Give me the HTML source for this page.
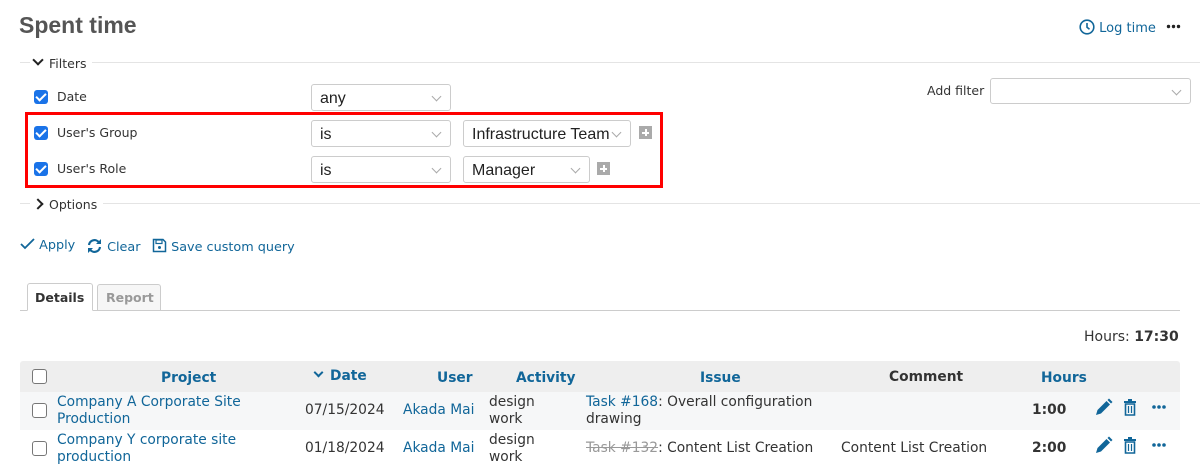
<!DOCTYPE html>
<html><head><meta charset="utf-8"><style>
*{box-sizing:border-box;margin:0;padding:0}
body{width:1200px;height:466px;overflow:hidden;background:#fff;font-family:"DejaVu Sans",Verdana,sans-serif;font-size:12px;color:#333;position:relative}
.a{position:absolute;white-space:nowrap}
.blue{color:#169}
.sel{position:absolute;border:1px solid #ccc;border-radius:3px;background:#fff;font-family:"Liberation Sans",Arial,sans-serif;font-size:16px;color:#222;padding:6px 8px;height:27px;line-height:16px}
.sel:after{content:"";position:absolute;right:10px;top:8px;width:6px;height:6px;border-right:1px solid #aaa;border-bottom:1px solid #aaa;transform:rotate(45deg)}
.cb{position:absolute;width:14px;height:14px;background:#1a73e8;border-radius:3px}
.cb:after{content:"";position:absolute;left:4px;top:1px;width:4px;height:8px;border-right:2px solid #fff;border-bottom:2px solid #fff;transform:rotate(45deg)}
.plus{position:absolute;width:13px;height:13px;background:#aaa;}
.plus:before{content:"";position:absolute;left:3px;top:6px;width:7px;height:2px;background:#fff}
.plus:after{content:"";position:absolute;left:6px;top:3px;width:2px;height:7px;background:#fff}
.ecb{position:absolute;width:15px;height:15px;border:1px solid #777;border-radius:3px;background:#fff}
.t{font-size:13.8px}
</style></head><body>
<div class="a" style="left:19px;top:12px;font-family:'Liberation Sans',Arial,sans-serif;font-weight:bold;font-size:23px;color:#555">Spent time</div>
<div class="a blue" style="left:1079px;top:19px;font-size:13px">
<svg width="16" height="16" viewBox="0 0 16 16" style="vertical-align:-3px"><circle cx="8" cy="8" r="6.8" fill="none" stroke="#169" stroke-width="1.6"/><path d="M8 4v4.3l2.5 2" fill="none" stroke="#169" stroke-width="1.6"/></svg> Log time</div>
<svg class="a" style="left:1166px;top:24px" width="16" height="5" viewBox="0 0 16 5"><circle cx="2.5" cy="2.5" r="1.7" fill="#222"/><circle cx="7.5" cy="2.5" r="1.7" fill="#222"/><circle cx="12.5" cy="2.5" r="1.7" fill="#222"/></svg>

<div class="a" style="left:20px;top:62px;width:1180px;height:1px;background:#e4e4e4"></div>
<div class="a" style="left:30px;top:56px;background:#fff;padding:0 6px 0 4px;font-size:12.5px"><span style="display:inline-block;width:8px;height:8px;border-right:2px solid #222;border-bottom:2px solid #222;transform:rotate(45deg);margin-right:7px;vertical-align:4px"></span>Filters</div>

<div class="cb" style="left:34px;top:90px"></div><div class="a" style="left:57px;top:89px;font-size:12.5px">Date</div>
<div class="sel" style="left:311px;top:84px;width:140px">any</div>
<div class="a" style="left:927px;top:83px;font-size:12.5px">Add filter</div>
<div class="sel" style="left:990px;top:78px;width:201px;height:26px"></div>

<div class="a" style="left:25px;top:112px;width:638px;height:76px;border:3.5px solid #f00"></div>
<div class="cb" style="left:34px;top:126px"></div><div class="a" style="left:57px;top:125px;font-size:12.5px">User's Group</div>
<div class="sel" style="left:311px;top:120px;width:140px">is</div>
<div class="sel" style="left:463px;top:120px;width:168px">Infrastructure Team</div>
<div class="plus" style="left:639px;top:126px"></div>
<div class="cb" style="left:34px;top:162px"></div><div class="a" style="left:57px;top:161px;font-size:12.5px">User's Role</div>
<div class="sel" style="left:311px;top:156px;width:140px">is</div>
<div class="sel" style="left:463px;top:156px;width:127px">Manager</div>
<div class="plus" style="left:597px;top:162px"></div>

<div class="a" style="left:20px;top:203px;width:1180px;height:1px;background:#e4e4e4"></div>
<div class="a" style="left:30px;top:197px;background:#fff;padding:0 6px 0 4px;font-size:12.5px"><span style="display:inline-block;width:8px;height:8px;border-right:2px solid #222;border-bottom:2px solid #222;transform:rotate(-45deg);margin-right:7px;vertical-align:1px"></span>Options</div>

<div class="a blue" style="left:20px;top:238px;font-size:12.8px"><svg width="15" height="12" viewBox="0 0 15 12" style="vertical-align:-1px"><path d="M1 6l4 4 9-9" fill="none" stroke="#169" stroke-width="1.8"/></svg> Apply</div>
<div class="a blue" style="left:86px;top:238px;font-size:12.8px"><svg width="17" height="16" viewBox="0 0 17 16" style="vertical-align:-3px"><path d="M3 7a5.5 5.5 0 0 1 10-2.5M14 9a5.5 5.5 0 0 1-10 2.5" fill="none" stroke="#169" stroke-width="2.2"/><path d="M15 1v5h-5zM2 15v-5h5z" fill="#169"/></svg> Clear</div>
<div class="a blue" style="left:152px;top:238px;font-size:12.8px"><svg width="15" height="15" viewBox="0 0 15 15" style="vertical-align:-2px"><path d="M1.5 1.5h9.5l2.5 2.5v9.5h-12z" fill="none" stroke="#169" stroke-width="1.5"/><rect x="4" y="2" width="6" height="3.5" fill="none" stroke="#169" stroke-width="1.2"/><circle cx="7.5" cy="9.5" r="1.5" fill="#169"/></svg> Save custom query</div>

<div class="a" style="left:20px;top:310px;width:1160px;height:1px;background:#ccc"></div>
<div class="a" style="left:27px;top:283px;width:66px;height:28px;border:1px solid #ccc;border-bottom:1px solid #fff;border-radius:3px 3px 0 0;background:#fff;font-weight:bold;font-size:12.5px;padding:6px 0 0 7px;color:#333">Details</div>
<div class="a" style="left:97px;top:284px;width:64px;height:26px;border:1px solid #ccc;border-bottom:none;border-radius:3px 3px 0 0;background:#f6f6f6;font-weight:bold;font-size:12.5px;padding:5px 0 0 8px;color:#999">Report</div>

<div class="a" style="left:1084px;top:329px;font-size:14px">Hours: <b>17:30</b></div>

<div class="a" style="left:20px;top:361px;width:1160px;height:32px;background:#eee;border-radius:3px 3px 0 0"></div>
<div class="a" style="left:20px;top:392px;width:1160px;height:38px;background:#f6f7f8"></div>
<div class="ecb" style="left:32px;top:369px"></div>
<div class="a blue t" style="left:161px;top:370px;font-weight:bold">Project</div>
<div class="a blue t" style="left:315px;top:368px;font-weight:bold"><span style="display:inline-block;width:7px;height:7px;border-right:2px solid #169;border-bottom:2px solid #169;transform:rotate(45deg);vertical-align:4px;margin-right:8px"></span>Date</div>
<div class="a blue t" style="left:437px;top:370px;font-weight:bold">User</div>
<div class="a blue t" style="left:516px;top:370px;font-weight:bold">Activity</div>
<div class="a blue t" style="left:700px;top:370px;font-weight:bold">Issue</div>
<div class="a t" style="left:889px;top:369px;font-weight:bold">Comment</div>
<div class="a blue t" style="left:1041px;top:370px;font-weight:bold">Hours</div>

<div class="ecb" style="left:32px;top:403px"></div>
<div class="a blue t" style="left:57px;top:394px;line-height:17px">Company A Corporate Site<br>Production</div>
<div class="a t" style="left:305px;top:402px">07/15/2024</div>
<div class="a blue t" style="left:403px;top:402px">Akada Mai</div>
<div class="a t" style="left:489px;top:394px;line-height:17px">design<br>work</div>
<div class="a t" style="left:586px;top:394px;line-height:17px"><span class="blue">Task #168</span>: Overall configuration<br>drawing</div>
<div class="a t" style="left:1032px;top:402px;font-weight:bold">1:00</div>

<div class="ecb" style="left:32px;top:441px"></div>
<div class="a blue t" style="left:57px;top:432px;line-height:17px">Company Y corporate site<br>production</div>
<div class="a t" style="left:305px;top:440px">01/18/2024</div>
<div class="a blue t" style="left:403px;top:440px">Akada Mai</div>
<div class="a t" style="left:489px;top:432px;line-height:17px">design<br>work</div>
<div class="a t" style="left:586px;top:440px"><span style="color:#999;text-decoration:line-through">Task #132</span>: Content List Creation</div>
<div class="a t" style="left:841px;top:440px">Content List Creation</div>
<div class="a t" style="left:1032px;top:440px;font-weight:bold">2:00</div>

<svg class="a" style="left:1094px;top:398px" width="80" height="62" viewBox="0 0 80 62">
<g id="ic">
<path d="M2 17l1.5-5 9-9 3.5 3.5-9 9z" fill="#169"/><path d="M13.5 2l1.5-1.5 3.5 3.5-1.5 1.5z" fill="#169"/>
<rect x="30" y="3" width="12" height="2" fill="#169"/><rect x="34" y="1" width="4" height="2" fill="#169"/>
<path d="M31.5 6h9v11h-9z" fill="none" stroke="#169" stroke-width="1.6"/><path d="M34.5 8v7M37.5 8v7" stroke="#169" stroke-width="1.2"/>
<circle cx="60" cy="9" r="1.8" fill="#169"/><circle cx="65" cy="9" r="1.8" fill="#169"/><circle cx="70" cy="9" r="1.8" fill="#169"/>
</g>
<use href="#ic" y="38"/>
</svg>
</body></html>
